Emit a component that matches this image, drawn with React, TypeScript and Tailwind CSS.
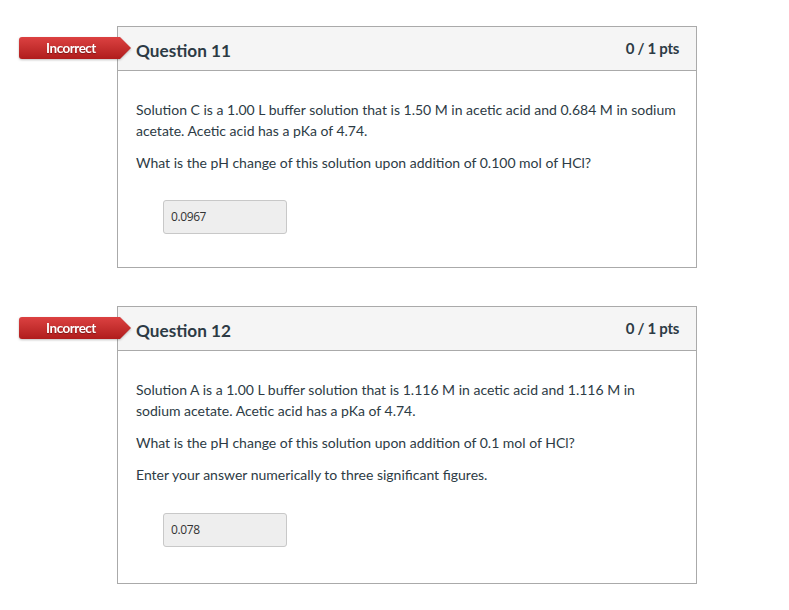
import React from "react";

type Q = {
  title: string;
  paras: string[];
  answer: string;
  last?: boolean;
};

const questions: Q[] = [
  {
    title: "Question 11",
    paras: [
      "Solution C is a 1.00 L buffer solution that is 1.50 M in acetic acid and 0.684 M in sodium acetate. Acetic acid has a pKa of 4.74.",
      "What is the pH change of this solution upon addition of 0.100 mol of HCl?",
    ],
    answer: "0.0967",
  },
  {
    title: "Question 12",
    paras: [
      "Solution A is a 1.00 L buffer solution that is 1.116 M in acetic acid and 1.116 M in sodium acetate. Acetic acid has a pKa of 4.74.",
      "What is the pH change of this solution upon addition of 0.1 mol of HCl?",
      "Enter your answer numerically to three significant figures.",
    ],
    answer: "0.078",
    last: true,
  },
];

function Badge() {
  return (
    <div className="absolute left-[-99px] top-[10px] h-[22px] w-[112px] drop-shadow-[0_1px_1px_rgba(0,0,0,0.25)]">
      <div className="flex h-full w-full items-center justify-center rounded-l-[3px] bg-gradient-to-b from-[#dc4141] to-[#b01c1c] pr-[8px] [clip-path:polygon(0_0,101px_0,112px_50%,101px_100%,0_100%)]">
        <span className="text-[13.5px] font-bold tracking-[-0.5px] text-white [text-shadow:0_1px_1px_rgba(0,0,0,0.35)]">
          Incorrect
        </span>
      </div>
    </div>
  );
}

function QuestionCard({ q }: { q: Q }) {
  return (
    <div className="relative ml-[117px] w-[580px] border border-[#aaaaaa] bg-white">
      <Badge />
      <div className="flex h-[44px] items-center justify-between border-b border-[#aaaaaa] bg-[#f5f5f5] pl-[18px] pr-[17px]">
        <span className="pt-[5px] text-[17.2px] font-bold text-[#2d3b45]">{q.title}</span>
        <span className="text-[15px] font-bold tracking-[-0.3px] text-[#2d3b45]">0 / 1 pts</span>
      </div>
      <div className={q.last ? "px-[18px] pb-[36px] pt-[28px]" : "px-[18px] pb-[33px] pt-[28px]"}>
        <div className="flex flex-col gap-[11px] text-[14px] leading-[21px] text-[#2d3b45]">
          {q.paras.map((p, i) => (
            <p key={i}>{p}</p>
          ))}
        </div>
        <div
          className={
            q.last
              ? "ml-[27px] mt-[28px] flex h-[34px] w-[124px] items-center rounded-[3px] border border-[#c8c8c8] bg-[#eeeeee] px-[7px] font-['Open_Sans',sans-serif] text-[12px] tracking-[-0.4px] text-[#333]"
              : "ml-[27px] mt-[27px] flex h-[34px] w-[124px] items-center rounded-[3px] border border-[#c8c8c8] bg-[#eeeeee] px-[7px] font-['Open_Sans',sans-serif] text-[12px] tracking-[-0.4px] text-[#333]"
          }
        >
          {q.answer}
        </div>
      </div>
    </div>
  );
}

export default function App() {
  return (
    <div className="min-h-[610px] w-[789px] bg-white pt-[26px] font-['Lato',sans-serif]">
      <div className="flex flex-col gap-[38px]">
        {questions.map((q) => (
          <QuestionCard key={q.title} q={q} />
        ))}
      </div>
    </div>
  );
}
